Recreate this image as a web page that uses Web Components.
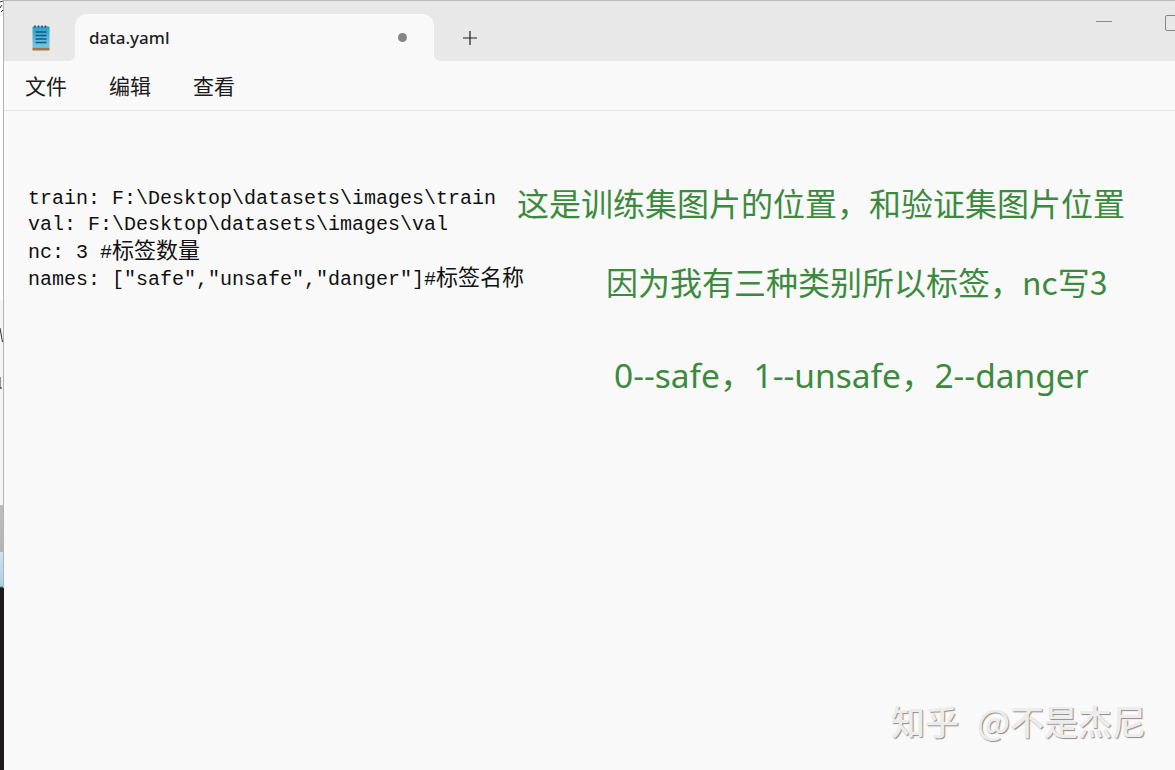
<!DOCTYPE html>
<html lang="zh-CN">
<head>
<meta charset="utf-8">
<title>data.yaml</title>
<style>
html,body{margin:0;padding:0;width:1175px;height:770px;overflow:hidden;background:#f9f9f9;font-family:"Noto Sans","Noto Sans CJK SC",sans-serif}
</style>
</head>
<body>
<np-window>
  <np-titlebar>
    <np-tab name="data.yaml"></np-tab>
  </np-titlebar>
  <np-menu><span>文件</span><span>编辑</span><span>查看</span></np-menu>
  <np-editor>
    <div>train: F:\Desktop\datasets\images\train</div>
    <div>val: F:\Desktop\datasets\images\val</div>
    <div>nc: 3 #<np-cjk>标签数量</np-cjk></div>
    <div>names: ["safe","unsafe","danger"]#<np-cjk>标签名称</np-cjk></div>
    <np-note slot="notes" style="left:513px;top:67px">这是训练集图片的位置，和验证集图片位置</np-note>
    <np-note slot="notes" style="left:602px;top:146px">因为我有三种类别所以标签，nc写3</np-note>
    <np-note slot="notes" style="left:610px;top:240px;font-family:'Noto Sans','Noto Sans CJK SC',sans-serif;font-size:33.5px">0--safe，1--unsafe，2--danger</np-note>
    <np-mark slot="notes"></np-mark>
  </np-editor>
</np-window>
<script>
function define(name, html, extra){
  customElements.define(name, class extends HTMLElement{
    constructor(){super();this.attachShadow({mode:"open"}).innerHTML=html;}
    connectedCallback(){ if(extra) extra(this); }
  });
}
define("np-window",`<style>
:host{display:flex;flex-direction:column;width:1175px;height:770px;box-sizing:border-box;position:relative;padding-left:4px;background:#f9f9f9}
.edge{position:absolute;left:0;top:0;bottom:0;width:4px;background:linear-gradient(to bottom,#fff 0,#fff 300px,#f4f4f4 300px,#f4f4f4 505px,#bdbdbd 505px,#b5b5b5 552px,#cfe3ee 552px,#a9cfe6 586px,#1e1a1a 588px,#1e1a1a 100%)}
.edge::after{content:"";position:absolute;right:0;top:0;bottom:182px;width:1.5px;background:#b4b4b4}
.edge svg{position:absolute;left:0;top:0}
</style><div class="edge"><svg width="3" height="400" viewBox="0 0 3 400"><path d="M0 2l3-1M0 8l2-3M1 12l2-2M0 328l2.5 14M0 377v12M0 388h2" stroke="#333" stroke-width="1" fill="none"/></svg></div><slot></slot>`);
define("np-titlebar",`<style>
:host{display:flex;align-items:flex-end;height:61px;flex:none;box-sizing:border-box;background:#e8e8e8;border-top:1px solid #b9b9b9;position:relative}
.logo{width:71px;align-self:stretch;display:flex;align-items:center;justify-content:center;padding-left:3px;box-sizing:border-box}
.logo svg{display:block;margin-top:13px}
.plus{width:72px;height:46px;display:flex;align-items:center;justify-content:center}
.spacer{flex:1}
.win{position:absolute;right:0;top:0;width:83px;height:40px}
.min{position:absolute;left:4px;top:20px;width:16px;height:1px;background:#8a8a8a}
.max{position:absolute;left:73px;top:14px;width:14px;height:14px;border:1.5px solid #858585;border-radius:2px}
</style>
<div class="logo"><svg width="18" height="26" viewBox="0 0 18 26">
<defs><linearGradient id="g" x1="0" y1="0" x2="0" y2="1"><stop offset="0" stop-color="#2b9fca"/><stop offset="1" stop-color="#78c6e3"/></linearGradient></defs>
<rect x="0.5" y="1.5" width="17" height="21" rx="1" fill="url(#g)"/>
<rect x="0.5" y="22.5" width="17" height="3" fill="#a5754a"/>
<path d="M3 0.5v2M6.5 0.5v2M10 0.5v2M13.5 0.5v2" stroke="#14506a" stroke-width="1.6"/>
<path d="M3.5 7h11M3.5 10.5h11M3.5 14h11M3.5 17.5h11" stroke="#0b5c86" stroke-width="1.6"/>
</svg></div>
<slot></slot>
<div class="plus"><svg width="16" height="16" viewBox="0 0 16 16"><path d="M8 1v14M1 8h14" stroke="#1f1f1f" stroke-width="1.2"/></svg></div>
<div class="spacer"></div>
<div class="win"><div class="min"></div><div class="max"></div></div>`);
define("np-tab",`<style>
:host{display:flex;align-items:center;width:359px;height:47px;box-sizing:border-box;background:#f9f9f9;border-radius:12px 12px 0 0;padding:0 27px 0 14px;position:relative;font:500 17px "Noto Sans","Liberation Sans",sans-serif;color:#1f1f1f}
.name{flex:1}
.dot{width:9px;height:9px;border-radius:50%;background:#858585}
.c{position:absolute;bottom:0;width:6px;height:6px;background:radial-gradient(circle at var(--x) 0,#e8e8e8 5.5px,#f9f9f9 6px)}
.l{left:-6px;--x:0}.r{right:-6px;--x:100%}
</style><span class="name"></span><span class="dot"></span><span class="c l"></span><span class="c r"></span>`,
 el=>{el.shadowRoot.querySelector(".name").textContent=el.getAttribute("name");});
define("np-menu",`<style>
:host{display:flex;flex:none;gap:42px;align-items:center;height:50px;box-sizing:border-box;padding:0 0 1px 21px;background:#f9f9f9;border-bottom:1px solid #e6e6e6;font:400 21px "Noto Sans CJK SC",sans-serif;color:#1b1b1b}
</style><slot></slot>`);
define("np-editor",`<style>
:host{display:block;flex:1;position:relative;background:#f9f9f9;padding:76px 0 0 24px;font:400 20px/27.3px "Liberation Mono","Noto Sans CJK SC",monospace;color:#111}
::slotted(div:first-child){line-height:24.3px}
</style><slot></slot><slot name="notes"></slot>`);
define("np-cjk",`<style>
:host{display:inline;font:400 22px/0 "Noto Sans CJK SC",sans-serif}
</style><slot></slot>`);
define("np-note",`<style>
:host{position:absolute;white-space:nowrap;font:400 32px/48px "Noto Sans CJK SC","Noto Sans",sans-serif;color:#3c8a3e}
</style><slot></slot>`);
define("np-mark",`<style>
:host{position:absolute;left:887px;top:586px;white-space:nowrap;font:500 34px/48px "Noto Sans CJK SC",sans-serif;color:#ececec;text-shadow:1px 1px 1px #8c8c8c}
.a{margin-right:18px}
</style><span class="a">知乎</span><span>@不是杰尼</span>`);
</script>
</body>
</html>
